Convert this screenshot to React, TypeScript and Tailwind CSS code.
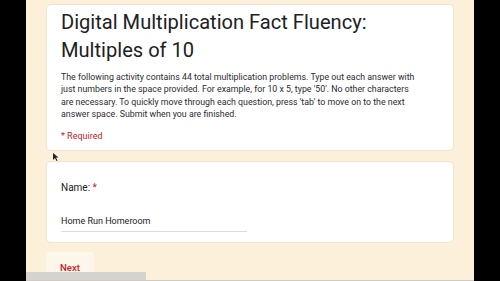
export default function App() {
  return (
    <div
      className="relative flex h-[281px] w-[500px] overflow-hidden bg-black"
      style={{ fontFamily: "Roboto, 'Liberation Sans', sans-serif" }}
    >
      <div className="w-[26px] shrink-0 bg-black" />
      <div className="flex w-[448px] shrink-0 flex-col bg-[#fcf0da] px-[20px] pt-[4px]">
        <div className="h-[151px] rounded-[5px] border border-[#efe4d2] bg-white px-[14px] pt-[3px]">
          <h1 className="text-[20.1px] leading-[28px] text-[#202124]">
            Digital Multiplication Fact Fluency:
            <br />
            Multiples of 10
          </h1>
          <p className="mt-[7px] whitespace-nowrap text-[8.8px] leading-[12.4px] text-[#2b2c2f]">
            The following activity contains 44 total multiplication problems. Type out each answer with
            <br />
            just numbers in the space provided. For example, for 10 x 5, type '50'. No other characters
            <br />
            are necessary. To quickly move through each question, press 'tab' to move on to the next
            <br />
            answer space. Submit when you are finished.
          </p>
          <p className="mt-[9px] text-[9px] leading-[12px] text-[#c5221f]">* Required</p>
        </div>
        <div className="mt-[10px] h-[84px] rounded-[5px] border border-[#efe4d2] bg-white px-[14px] pt-[19px]">
          <div className="text-[10px] leading-[14px] text-[#202124]">
            Name: <span className="text-[#c5221f]">*</span>
          </div>
          <div className="mt-[20px] w-[186px] border-b border-[#dadce0] pb-[4px] text-[9px] leading-[12px] text-[#202124]">
            Home Run Homeroom
          </div>
        </div>
        <div className="mt-[9px] flex h-[30px] w-[48px] items-start justify-center rounded-t-[4px] bg-[#fdf6ea] pt-[9px] text-[9.6px] font-medium text-[#c5221f]">
          Next
        </div>
      </div>
      <div className="flex-1 bg-black" />
      <div className="absolute bottom-0 left-[26px] h-[9px] w-[120px] bg-[#d5d3d0]" />
      <div className="absolute bottom-0 left-[26px] h-[1px] w-[448px] bg-[#cfcac2]" />
      <svg className="absolute left-[53px] top-[153px]" width="6" height="8" viewBox="0 0 6 8">
        <path d="M0 0 L0 7 L2 5 L3.5 8 L4.5 7.5 L3 4.5 L5.5 4.5 Z" fill="#222" />
      </svg>
    </div>
  );
}
